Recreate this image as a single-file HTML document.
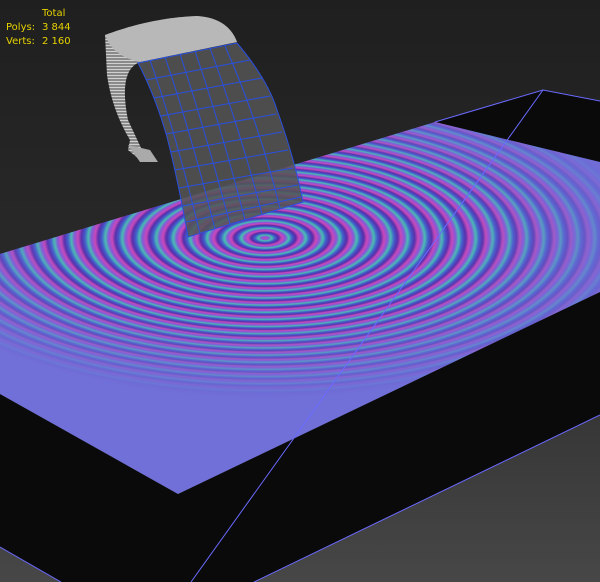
<!DOCTYPE html>
<html><head><style>
html,body{margin:0;padding:0;background:#2a2a2a;}
svg{display:block}
.t{font-family:"DejaVu Sans","Liberation Sans",sans-serif;font-size:10px;fill:#e6d200}
</style></head><body>
<svg width="600" height="582" viewBox="0 0 600 582" xmlns="http://www.w3.org/2000/svg">
<defs>
<linearGradient id="bg" x1="0" y1="0" x2="0" y2="1">
<stop offset="0" stop-color="#1f1f1f"/><stop offset="0.5" stop-color="#2a2a2a"/><stop offset="1" stop-color="#474747"/>
</linearGradient>
<radialGradient id="rip" gradientUnits="userSpaceOnUse" cx="265" cy="0" r="17" spreadMethod="repeat" gradientTransform="translate(0,238) scale(1,0.42)">
<stop offset="0" stop-color="#e040b0"/>
<stop offset="0.2" stop-color="#9050d8"/>
<stop offset="0.4" stop-color="#40d0a8"/>
<stop offset="0.6" stop-color="#3858c8"/>
<stop offset="0.8" stop-color="#5020a0"/>
<stop offset="1" stop-color="#e040b0"/>
</radialGradient>
<radialGradient id="fade" gradientUnits="userSpaceOnUse" cx="265" cy="0" r="380" gradientTransform="translate(0,238) scale(1,0.42)">
<stop offset="0" stop-color="#fff" stop-opacity="1"/>
<stop offset="0.55" stop-color="#fff" stop-opacity="0.9"/>
<stop offset="0.85" stop-color="#fff" stop-opacity="0.35"/>
<stop offset="1" stop-color="#fff" stop-opacity="0"/>
</radialGradient>
<mask id="m"><rect width="600" height="582" fill="url(#fade)"/></mask>
<clipPath id="top"><polygon points="0,254 435,122 600,162 600,292 178,494 0,394"/></clipPath>
<pattern id="stripes" width="6" height="3" patternUnits="userSpaceOnUse"><rect width="6" height="3" fill="#8a8a8a"/><rect width="6" height="1" fill="#d0d0d0"/></pattern>
</defs>
<rect width="600" height="582" fill="url(#bg)"/>
<polygon points="435,122 543,90 600,101 600,162" fill="#0a0a0a"/>
<polygon points="0,394 178,494 600,292 600,415 254,582 61,582 0,547" fill="#0a0a0a"/>
<polygon points="0,254 435,122 600,162 600,292 178,494 0,394" fill="#7070d8"/>
<g clip-path="url(#top)"><rect width="600" height="582" fill="url(#rip)" mask="url(#m)" opacity="0.85"/></g>
<g stroke="#6a6aff" stroke-width="1" fill="none">
<polyline points="435,122 543,90 600,101"/>
<line x1="543" y1="90" x2="191" y2="582"/>
<line x1="600" y1="415" x2="254" y2="582"/>
<line x1="0" y1="547" x2="61" y2="582"/>
</g>
<path d="M105,35 Q150,18 197,16 Q228,18 237,42 L140,62 Q118,70 128,120 L142,150 L150,160 L140,160 L128,150 L130,140 Q112,110 107,75 Z" fill="url(#stripes)"/>
<path d="M105,35 Q150,18 197,16 Q228,18 237,42 L140,62 Q120,58 110,45 Z" fill="#b8b8b8"/>
<path d="M128,145 L150,150 L158,162 L140,162 Z" fill="#aaa"/>
<path d="M138,63 L237,43 Q268,80 277,110 Q295,160 303,202 L188,237 Q178,180 167,137 Q155,95 138,63 Z" fill="#555" opacity="0.85"/>
<g stroke="#2a50e0" stroke-width="1" fill="none">
<path d="M138,63 L237,43 Q268,80 277,110 Q295,160 303,202 L188,237 Q178,180 167,137 Q155,95 138,63 Z"/>
<path d="M146,80 L250,60 M154,98 L262,78 M161,116 L270,96 M166,134 L276,114 M171,152 L282,132 M175,170 L288,150 M179,188 L293,168 M183,206 L298,185 M186,222 L301,197"/>
<path d="M150,60 Q175,130 200,234 M165,57 Q190,130 215,229 M180,54 Q205,130 230,224 M195,51 Q222,130 245,220 M210,48 Q240,130 262,214 M225,46 Q258,120 280,208"/>
</g>
<text class="t" x="42" y="16">Total</text>
<text class="t" x="6" y="30">Polys:</text><text class="t" x="42" y="30">3 844</text>
<text class="t" x="6" y="44">Verts:</text><text class="t" x="42" y="44">2 160</text>
</svg>
</body></html>
